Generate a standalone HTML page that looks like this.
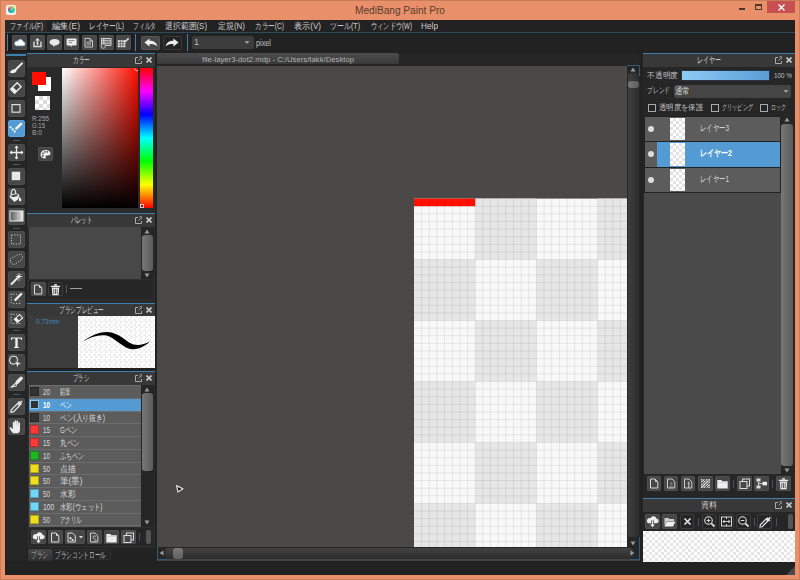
<!DOCTYPE html>
<html><head><meta charset="utf-8"><style>
*{margin:0;padding:0;box-sizing:border-box}
html,body{width:800px;height:580px;overflow:hidden;background:#E9906A;font-family:"Liberation Sans",sans-serif;position:relative}
div,span,svg{position:absolute}
.t{white-space:nowrap;line-height:1;transform-origin:0 0}
</style></head><body>
<div style="left:0px;top:0px;width:800px;height:580px;box-shadow:inset 0 0 0 1px #c97d58"></div>
<div style="left:6px;top:5px;width:10px;height:10px;background:#f4f4f4;border-radius:2px"></div>
<div style="left:8px;top:6px;width:7px;height:7px;border-radius:50%;background:radial-gradient(circle at 55% 50%,#20e0f0 0,rgba(32,224,240,0) 60%),conic-gradient(from -20deg,#f7a03a,#a8e040 70deg,#40c848 140deg,#18b0a8 210deg,#1898b8 250deg,#f02c64 300deg,#f7a03a)"></div>
<span class="t j" style="left:355.0px;top:6px;font-size:10px;color:#583c2e;--w:90;transform:scaleX(1.0118);">MediBang Paint Pro</span>
<div style="left:739px;top:8px;width:6px;height:2px;background:#4b3428"></div>
<div style="left:755px;top:4px;width:7px;height:6px;border:1px solid #4b3428;border-top-width:2px"></div>
<div style="left:767px;top:1px;width:28px;height:12px;background:#C75050"></div>
<svg style="left:778px;top:4px;" width="7" height="7" viewBox="0 0 7 7"><path d="M0.5 0.5L6.5 6.5M6.5 0.5L0.5 6.5" stroke="#fff" stroke-width="1.4"/></svg>
<div style="left:5px;top:20px;width:790px;height:555px;background:#222"></div>
<div style="left:5px;top:20px;width:42px;height:12px;background:#2a2a2a"></div>
<span class="t j" style="left:10.0px;top:22px;font-size:9px;color:#d0d0d0;--w:33;transform:scaleX(0.6947);">ファイル(F)</span>
<span class="t j" style="left:52.0px;top:22px;font-size:9px;color:#d0d0d0;--w:28;transform:scaleX(0.9333);">編集(E)</span>
<span class="t j" style="left:89.0px;top:22px;font-size:9px;color:#d0d0d0;--w:35;transform:scaleX(0.7447);">レイヤー(L)</span>
<span class="t j" style="left:133.0px;top:22px;font-size:9px;color:#d0d0d0;--w:23;transform:scaleX(0.6389);">フィルタ</span>
<span class="t j" style="left:165.0px;top:22px;font-size:9px;color:#d0d0d0;--w:42;transform:scaleX(0.8750);">選択範囲(S)</span>
<span class="t j" style="left:218.0px;top:22px;font-size:9px;color:#d0d0d0;--w:27;transform:scaleX(0.8852);">定規(N)</span>
<span class="t j" style="left:255.0px;top:22px;font-size:9px;color:#d0d0d0;--w:29;transform:scaleX(0.7342);">カラー(C)</span>
<span class="t j" style="left:294.0px;top:22px;font-size:9px;color:#d0d0d0;--w:27;transform:scaleX(0.9000);">表示(V)</span>
<span class="t j" style="left:330.0px;top:22px;font-size:9px;color:#d0d0d0;--w:30;transform:scaleX(0.7792);">ツール(T)</span>
<span class="t j" style="left:371.0px;top:22px;font-size:9px;color:#d0d0d0;--w:41;transform:scaleX(0.6891);">ウィンドウ(W)</span>
<span class="t j" style="left:421.0px;top:22px;font-size:9px;color:#d0d0d0;--w:17;transform:scaleX(0.9181);">Help</span>
<div style="left:5px;top:32px;width:790px;height:1px;background:#2e4a5e"></div>
<div style="left:8px;top:33px;width:125px;height:19px;background:#1c1c1c"></div>
<div style="left:7px;top:34px;width:1px;height:17px;background:#3f7fae"></div>
<div style="left:12px;top:35px;width:15px;height:15px;background:#484848;border-radius:2px;box-shadow:inset 0 0 0 1px #4e4e4e"></div>
<svg style="left:12px;top:35px;" width="15" height="15" viewBox="0 0 15 15"><path d="M4.4 10.8h6.6a2 2 0 0 0 0.2-4a2.8 2.8 0 0 0-5.4-0.6a2.1 2.1 0 0 0-1.4 4.6z" fill="#fff" stroke="#8cc2ee" stroke-width="0.8"/></svg>
<div style="left:30px;top:35px;width:15px;height:15px;background:#484848;border-radius:2px;box-shadow:inset 0 0 0 1px #4e4e4e"></div>
<svg style="left:30px;top:35px;" width="15" height="15" viewBox="0 0 15 15"><path d="M4 6.5v5h7v-5" stroke="#ddd" stroke-width="1.4" fill="none"/><path d="M7.5 10V4.2" stroke="#ddd" stroke-width="1.6"/><path d="M5 5.6L7.5 3 10 5.6z" fill="#ddd"/></svg>
<div style="left:47px;top:35px;width:15px;height:15px;background:#484848;border-radius:2px;box-shadow:inset 0 0 0 1px #4e4e4e"></div>
<svg style="left:47px;top:35px;" width="15" height="15" viewBox="0 0 15 15"><ellipse cx="7.6" cy="7.2" rx="5" ry="3.3" fill="#e8e8e8"/><path d="M6 9.5L6.5 12L8.5 10z" fill="#e8e8e8"/></svg>
<div style="left:64px;top:35px;width:15px;height:15px;background:#484848;border-radius:2px;box-shadow:inset 0 0 0 1px #4e4e4e"></div>
<svg style="left:64px;top:35px;" width="15" height="15" viewBox="0 0 15 15"><rect x="2.6" y="3.5" width="10" height="7" rx="1" fill="#eee"/><path d="M6 10.5L7 12L8.5 10.5z" fill="#eee"/><path d="M4.5 5.6h6M4.5 7.6h3.5" stroke="#888" stroke-width="1"/></svg>
<div style="left:82px;top:35px;width:15px;height:15px;background:#484848;border-radius:2px;box-shadow:inset 0 0 0 1px #4e4e4e"></div>
<svg style="left:82px;top:35px;" width="15" height="15" viewBox="0 0 15 15"><path d="M3 3.4h4.9l2.6 2.6v6h-7.5z" fill="#3c3c3c" stroke="#ddd" stroke-width="0.9"/><rect x="4.4" y="6.2" width="4.7" height="4.4" fill="#8a8a8a"/><path d="M7.9 3.4v2.6h2.6" fill="none" stroke="#ddd" stroke-width="0.8"/></svg>
<div style="left:99px;top:35px;width:15px;height:15px;background:#484848;border-radius:2px;box-shadow:inset 0 0 0 1px #4e4e4e"></div>
<svg style="left:99px;top:35px;" width="15" height="15" viewBox="0 0 15 15"><path d="M2.5 3.5h9.5v7h-9.5z M2.5 5.8h9.5 M2.5 8.2h9.5 M4.8 3.5v7" stroke="#ddd" stroke-width="0.9" fill="#666"/><circle cx="4.3" cy="11" r="2.3" fill="#555" stroke="#ccc" stroke-width="0.8"/></svg>
<div style="left:116px;top:35px;width:15px;height:15px;background:#484848;border-radius:2px;box-shadow:inset 0 0 0 1px #4e4e4e"></div>
<svg style="left:116px;top:35px;" width="15" height="15" viewBox="0 0 15 15"><path d="M1.8 5.2h7.6v7h-7.6z" fill="#eee"/><path d="M1.8 7.6h7.6M1.8 9.9h7.6M4.3 5.2v7M6.8 5.2v7" stroke="#555" stroke-width="0.8"/><path d="M9.2 6.8L12.6 3.4" stroke="#ddd" stroke-width="1.6"/><path d="M8.2 7.8l0.4-1.2l0.8 0.8z" fill="#ddd"/></svg>
<div style="left:135px;top:34px;width:1px;height:17px;background:#3f7fae"></div>
<div style="left:141px;top:36px;width:19px;height:14px;background:#484848;border-radius:2px;box-shadow:inset 0 0 0 1px #555"></div>
<svg style="left:141px;top:36px;" width="19" height="14" viewBox="0 0 19 14"><path d="M3.4 6.4L8.6 2.4V4.8C12.8 4.8 15.8 6.8 16.4 10.6C14.6 8.6 12 8.1 8.6 8.1V10.4z" fill="#eee"/></svg>
<div style="left:163px;top:36px;width:19px;height:14px;background:#232323;border-radius:2px;box-shadow:inset 0 0 0 1px #3a3a3a"></div>
<svg style="left:163px;top:36px;" width="19" height="14" viewBox="0 0 19 14"><path d="M15.6 6.4L10.4 2.4V4.8C6.2 4.8 3.2 6.8 2.6 10.6C4.4 8.6 7 8.1 10.4 8.1V10.4z" fill="#eee"/></svg>
<div style="left:187px;top:34px;width:1px;height:17px;background:#3f7fae"></div>
<div style="left:192px;top:36px;width:62px;height:13px;background:#3c3c3c;border-radius:2px"></div>
<span class="t" style="left:194px;top:38px;font-size:9px;color:#bbb;">1</span>
<svg style="left:244px;top:40px;" width="6" height="5" viewBox="0 0 6 5"><path d="M0.5 1L3 4L5.5 1z" fill="#9a9a9a"/></svg>
<span class="t j" style="left:256.0px;top:39px;font-size:9px;color:#c4c4c4;--w:15;transform:scaleX(0.8101);">pixel</span>
<div style="left:6px;top:53px;width:20px;height:508px;background:#262626"></div>
<div style="left:6px;top:54px;width:20px;height:2px;background:#3f7fae"></div>
<div style="left:8px;top:60px;width:17px;height:17px;background:#474747;border-radius:3px;box-shadow:inset 0 0 0 1px #4d4d4d"></div>
<svg style="left:8px;top:60px;" width="17" height="17" viewBox="0 0 17 17"><path d="M14 3.4L7.6 9.8" stroke="#eee" stroke-width="2" stroke-linecap="round"/><path d="M1.8 12.8C2.5 10.3 5 9 7.2 9.4L8.6 10.8C8.2 13 5 13.8 1.8 12.8z" fill="#eee"/></svg>
<div style="left:8px;top:80px;width:17px;height:17px;background:#474747;border-radius:3px;box-shadow:inset 0 0 0 1px #4d4d4d"></div>
<svg style="left:8px;top:80px;" width="17" height="17" viewBox="0 0 17 17"><g transform="rotate(-45 7.9 8)"><rect x="3.3" y="5.2" width="9.2" height="5.6" fill="none" stroke="#eee" stroke-width="1.3"/><rect x="3.3" y="5.2" width="3.2" height="5.6" fill="#eee"/></g></svg>
<div style="left:8px;top:100px;width:17px;height:17px;background:#474747;border-radius:3px;box-shadow:inset 0 0 0 1px #4d4d4d"></div>
<svg style="left:8px;top:100px;" width="17" height="17" viewBox="0 0 17 17"><rect x="4" y="4.6" width="8" height="7.6" fill="none" stroke="#ddd" stroke-width="1.2"/></svg>
<div style="left:8px;top:120px;width:17px;height:17px;background:#559bd3;border-radius:3px;box-shadow:inset 0 0 0 1px #5aa5e0"></div>
<svg style="left:8px;top:120px;" width="17" height="17" viewBox="0 0 17 17"><path d="M8.4 8.4L13.2 3.8" stroke="#f4f4f4" stroke-width="2.5" stroke-linecap="round"/><circle cx="2.6" cy="7.3" r="1.15" fill="#f4f4f4"/><circle cx="4.7" cy="9.4" r="1.15" fill="#f4f4f4"/><circle cx="6.7" cy="11.5" r="1.15" fill="#f4f4f4"/></svg>
<div style="left:8px;top:144px;width:17px;height:17px;background:#474747;border-radius:3px;box-shadow:inset 0 0 0 1px #4d4d4d"></div>
<svg style="left:8px;top:144px;" width="17" height="17" viewBox="0 0 17 17"><path d="M8.5 2v13M2 8.5h13" stroke="#eee" stroke-width="1.3"/><path d="M8.5 1.6L6.6 4h3.8zM8.5 15.4L6.6 13h3.8zM1.6 8.5L4 6.6v3.8zM15.4 8.5L13 6.6v3.8z" fill="#eee"/></svg>
<div style="left:8px;top:168px;width:17px;height:17px;background:#474747;border-radius:3px;box-shadow:inset 0 0 0 1px #4d4d4d"></div>
<svg style="left:8px;top:168px;" width="17" height="17" viewBox="0 0 17 17"><rect x="3.7" y="3.7" width="8.5" height="8.5" fill="#e8e8e8"/></svg>
<div style="left:8px;top:188px;width:17px;height:17px;background:#474747;border-radius:3px;box-shadow:inset 0 0 0 1px #4d4d4d"></div>
<svg style="left:8px;top:188px;" width="17" height="17" viewBox="0 0 17 17"><path d="M3.4 7.2C2.8 3.6 4 1.4 5.6 1.4C7.2 1.4 7.9 3.4 7.5 6" stroke="#ddd" stroke-width="1.3" fill="none"/><path d="M1.4 8.8C3 5.4 8.6 4.6 11.3 7L10 11.4L6.4 13.9z" fill="#eee"/><ellipse cx="6.5" cy="7.6" rx="3.4" ry="1.1" transform="rotate(-12 6.5 7.6)" fill="#474747"/><path d="M11 8.2C12.5 9.8 13.8 11 13.4 12.6C12.9 13.6 11.1 13.5 10.9 12.3C10.7 11 11.3 10 11 8.2z" fill="#eee"/></svg>
<div style="left:8px;top:208px;width:17px;height:17px;background:#474747;border-radius:3px;box-shadow:inset 0 0 0 1px #4d4d4d"></div>
<svg style="left:8px;top:208px;" width="17" height="17" viewBox="0 0 17 17"><defs><linearGradient id="gg"><stop offset="0" stop-color="#555"/><stop offset="1" stop-color="#e8e8e8"/></linearGradient></defs><rect x="2" y="3" width="13" height="10" fill="url(#gg)" stroke="#eee" stroke-width="1"/></svg>
<div style="left:8px;top:231px;width:17px;height:17px;background:#474747;border-radius:3px;box-shadow:inset 0 0 0 1px #4d4d4d"></div>
<svg style="left:8px;top:231px;" width="17" height="17" viewBox="0 0 17 17"><rect x="3.5" y="4" width="9" height="9" fill="none" stroke="#ccc" stroke-width="1" stroke-dasharray="1.2 1.5"/></svg>
<div style="left:8px;top:251px;width:17px;height:17px;background:#474747;border-radius:3px;box-shadow:inset 0 0 0 1px #4d4d4d"></div>
<svg style="left:8px;top:251px;" width="17" height="17" viewBox="0 0 17 17"><path d="M2.5 10C1.5 7 4.5 6.5 7 5.5C9.5 3.5 14 1.8 14.5 5.5C15 9 11 10 8 12.5C5.5 14.5 3 13 2.5 10z" fill="none" stroke="#ccc" stroke-width="1" stroke-dasharray="1 1.3"/></svg>
<div style="left:8px;top:271px;width:17px;height:17px;background:#474747;border-radius:3px;box-shadow:inset 0 0 0 1px #4d4d4d"></div>
<svg style="left:8px;top:271px;" width="17" height="17" viewBox="0 0 17 17"><path d="M3.5 13L10.5 6" stroke="#eee" stroke-width="1.9" stroke-linecap="round"/><path d="M11 5.5m0-3.2v2M11 8v2M7.8 5.5h2M12.3 5.5h2M8.8 3.3l1.2 1.2M12 6.6l1.2 1.2M13.2 3.3l-1.2 1.2" stroke="#eee" stroke-width="0.8"/><circle cx="11" cy="5.5" r="1.3" fill="#fff"/></svg>
<div style="left:8px;top:291px;width:17px;height:17px;background:#474747;border-radius:3px;box-shadow:inset 0 0 0 1px #4d4d4d"></div>
<svg style="left:8px;top:291px;" width="17" height="17" viewBox="0 0 17 17"><path d="M2.6 3.3h1.6M5.2 3.3h1.2M8 3.3h1.2M3.2 5.8v1.2M3.2 8.4v1.2M3.2 11v1.2M5.2 12.6h1.2M8 12.6h1.2M10.8 12.6h1.4" stroke="#c8c8c8" stroke-width="1"/><path d="M7.4 8.9L13.2 3" stroke="#eee" stroke-width="2.4" stroke-linecap="round"/><path d="M11.5 9.5l0.8 0.8" stroke="#ccc" stroke-width="0.9"/></svg>
<div style="left:8px;top:311px;width:17px;height:17px;background:#474747;border-radius:3px;box-shadow:inset 0 0 0 1px #4d4d4d"></div>
<svg style="left:8px;top:311px;" width="17" height="17" viewBox="0 0 17 17"><path d="M2.6 3.3h1.6M5.2 3.3h1.2M8 3.3h1.2M3.2 5.8v1.2M3.2 8.4v1.2M3.2 11v1.2M5.2 12.6h1.2M8 12.6h1.2M10.8 12.6h1.4" stroke="#c8c8c8" stroke-width="1"/><g transform="rotate(-42 10.3 7.6)"><rect x="7" y="5.4" width="7" height="4.6" fill="none" stroke="#eee" stroke-width="1.1"/><rect x="7" y="5.4" width="2.6" height="4.6" fill="#eee"/></g></svg>
<div style="left:8px;top:334px;width:17px;height:17px;background:#474747;border-radius:3px;box-shadow:inset 0 0 0 1px #4d4d4d"></div>
<svg style="left:8px;top:334px;" width="17" height="17" viewBox="0 0 17 17"><path d="M3 3.5h11v2.6h-0.8l-0.5-1.6h-3v8.3l1.3 0.5v0.7h-5v-0.7l1.3-0.5v-8.3h-3l-0.5 1.6H3z" fill="#eee"/></svg>
<div style="left:8px;top:354px;width:17px;height:17px;background:#474747;border-radius:3px;box-shadow:inset 0 0 0 1px #4d4d4d"></div>
<svg style="left:8px;top:354px;" width="17" height="17" viewBox="0 0 17 17"><path d="M5 2L8.2 2.8L9.6 5.6L8.9 8.8L5.8 10.2L2.8 9.4L1.4 6.5L2.4 3.3z" fill="none" stroke="#ddd" stroke-width="1.1" stroke-linejoin="round"/><path d="M7.1 7.2L13.6 9.4L10.6 10.5L9.4 13.6z" fill="#eee" stroke="#474747" stroke-width="0.5"/></svg>
<div style="left:8px;top:374px;width:17px;height:17px;background:#474747;border-radius:3px;box-shadow:inset 0 0 0 1px #4d4d4d"></div>
<svg style="left:8px;top:374px;" width="17" height="17" viewBox="0 0 17 17"><path d="M9.2 8.2L13.2 4.2" stroke="#eee" stroke-width="3.4" stroke-linecap="round"/><path d="M9 8.3L3 13.2L8 12z" fill="#333" stroke="#e6e6e6" stroke-width="1.1" stroke-linejoin="round"/></svg>
<div style="left:8px;top:398px;width:17px;height:17px;background:#474747;border-radius:3px;box-shadow:inset 0 0 0 1px #4d4d4d"></div>
<svg style="left:8px;top:398px;" width="17" height="17" viewBox="0 0 17 17"><path d="M3 14.2l0.3-2.3l6.2-6.2l2 2l-6.2 6.2z" fill="none" stroke="#eee" stroke-width="1.2"/><path d="M9.5 4.5l1.5-1.5l1 1l1.5-1.5l1 1l-1.5 1.5l1 1l-1.5 1.5z" fill="#eee"/></svg>
<div style="left:8px;top:418px;width:17px;height:17px;background:#474747;border-radius:3px;box-shadow:inset 0 0 0 1px #4d4d4d"></div>
<svg style="left:8px;top:418px;" width="17" height="17" viewBox="0 0 17 17"><path d="M5 15.2C3.6 13.8 2.5 12.2 1.8 10.6L1.6 9.6C1.9 9 2.6 9 3.1 9.5L4.8 11.2L4.8 4.6C4.8 3.6 6.4 3.6 6.4 4.6L6.5 8.6L6.6 2.9C6.6 1.9 8.2 1.9 8.2 2.9L8.3 8.6L8.5 3.3C8.5 2.3 10.1 2.3 10.1 3.3L10.2 8.8L10.4 5C10.4 4.1 12 4.1 12 5L12 11.2C12 13.6 11 15.2 9 15.2z" fill="#eee"/></svg>
<div style="left:13px;top:140px;width:7px;height:1px;background:#4a5866"></div>
<div style="left:13px;top:164px;width:7px;height:1px;background:#4a5866"></div>
<div style="left:13px;top:228px;width:7px;height:1px;background:#4a5866"></div>
<div style="left:13px;top:330px;width:7px;height:1px;background:#4a5866"></div>
<div style="left:13px;top:394px;width:7px;height:1px;background:#4a5866"></div>
<div style="left:27px;top:53px;width:128px;height:1px;background:#3f7fae"></div>
<div style="left:27px;top:54px;width:128px;height:13px;background:#383838"></div>
<span class="t j" style="left:72.5px;top:56px;font-size:9px;color:#d0d0d0;--w:17;transform:scaleX(0.6296);">カラー</span>
<svg style="left:134px;top:56px;" width="8" height="8" viewBox="0 0 8 8"><path d="M4 1.5H1.5v6h6V5" fill="none" stroke="#aaa" stroke-width="1"/><path d="M4.5 4.5L7.5 1.5M5.5 0.8h2.6v2.6" fill="none" stroke="#aaa" stroke-width="0.9"/></svg>
<svg style="left:146px;top:57px;" width="6" height="6" viewBox="0 0 6 6"><path d="M0.5 0.5L5.5 5.5M5.5 0.5L0.5 5.5" stroke="#c8c8c8" stroke-width="1.6"/></svg>
<div style="left:27px;top:67px;width:128px;height:146px;background:#2a2a2a"></div>
<div style="left:38px;top:77px;width:13px;height:14px;background:#fff"></div>
<div style="left:32px;top:72px;width:14px;height:13px;background:#ff0f00"></div>
<div style="left:35px;top:96px;width:15px;height:14px;background:repeating-conic-gradient(#dcdcdc 0 25%,#fff 0 50%) 0 0/8px 8px"></div>
<span class="t j" style="left:32.0px;top:115px;font-size:7px;color:#a8a8a8;--w:17;transform:scaleX(0.9097);">R:255</span>
<span class="t j" style="left:32.0px;top:122px;font-size:7px;color:#a8a8a8;--w:13;transform:scaleX(0.8560);">G:15</span>
<span class="t j" style="left:32.0px;top:129px;font-size:7px;color:#a8a8a8;--w:10;transform:scaleX(0.9510);">B:0</span>
<div style="left:38px;top:147px;width:15px;height:14px;background:#474747;border-radius:2px;box-shadow:inset 0 0 0 1px #4f4f4f"></div>
<svg style="left:38px;top:147px;" width="15" height="14" viewBox="0 0 15 14"><path d="M7.5 3C4.5 3 2.5 5 2.5 7.5C2.5 10 4.5 11.5 7 11.5C8.2 11.5 8 10.5 7.6 10C7.2 9.3 7.8 8.5 8.8 8.5H10C11.5 8.5 12.5 7.8 12.5 6.5C12.5 4.5 10.5 3 7.5 3z" fill="#eee"/><circle cx="5" cy="6.5" r="0.9" fill="#555"/><circle cx="6.8" cy="4.8" r="0.9" fill="#555"/><circle cx="9.2" cy="4.8" r="0.9" fill="#555"/><circle cx="4.8" cy="9" r="0.9" fill="#555"/></svg>
<div style="left:62px;top:68px;width:76px;height:140px;background:linear-gradient(to bottom,rgba(0,0,0,0),#000),linear-gradient(to right,#fff,#ff0f00)"></div>
<div style="left:140px;top:68px;width:13px;height:140px;background:linear-gradient(to bottom,#f00 0%,#f0f 16.67%,#00f 33.33%,#0ff 50%,#0f0 66.67%,#ff0 83.33%,#f00 100%)"></div>
<svg style="left:134px;top:66px;" width="6" height="6" viewBox="0 0 6 6"><path d="M1 2.5A2 2 0 0 0 4 4.5" fill="none" stroke="#ddd" stroke-width="0.9"/></svg>
<div style="left:140px;top:204px;width:4px;height:4px;box-shadow:inset 0 0 0 1px #ccc;background:#c00"></div>
<div style="left:27px;top:213px;width:128px;height:1px;background:#3f7fae"></div>
<div style="left:27px;top:214px;width:128px;height:13px;background:#383838"></div>
<span class="t j" style="left:70.5px;top:216px;font-size:9px;color:#d0d0d0;--w:21;transform:scaleX(0.5833);">パレット</span>
<svg style="left:134px;top:216px;" width="8" height="8" viewBox="0 0 8 8"><path d="M4 1.5H1.5v6h6V5" fill="none" stroke="#aaa" stroke-width="1"/><path d="M4.5 4.5L7.5 1.5M5.5 0.8h2.6v2.6" fill="none" stroke="#aaa" stroke-width="0.9"/></svg>
<svg style="left:146px;top:217px;" width="6" height="6" viewBox="0 0 6 6"><path d="M0.5 0.5L5.5 5.5M5.5 0.5L0.5 5.5" stroke="#c8c8c8" stroke-width="1.6"/></svg>
<div style="left:27px;top:227px;width:128px;height:76px;background:#2a2a2a"></div>
<div style="left:29px;top:227px;width:112px;height:52px;background:#484848"></div>
<div style="left:141px;top:227px;width:13px;height:52px;background:#262626"></div>
<svg style="left:144px;top:229px;" width="6" height="5" viewBox="0 0 6 5"><path d="M0.5 4.5L3 0.5L5.5 4.5z" fill="#9a9a9a"/></svg>
<div style="left:142px;top:235px;width:11px;height:36px;background:linear-gradient(90deg,#777,#5c5c5c);border-radius:3px"></div>
<svg style="left:144px;top:273px;" width="6" height="5" viewBox="0 0 6 5"><path d="M0.5 0.5L3 4.5L5.5 0.5z" fill="#9a9a9a"/></svg>
<div style="left:28px;top:279px;width:126px;height:21px;background:#262626;box-shadow:inset 0 0 0 1px #2e2e2e"></div>
<div style="left:31px;top:282px;width:15px;height:14px;background:#474747;border-radius:2px;box-shadow:inset 0 0 0 1px #4f4f4f"></div>
<svg style="left:31px;top:282px;" width="15" height="14" viewBox="0 0 15 14"><path d="M3.5 3h4.5l2.8 2.8v6.2h-7.3z" fill="none" stroke="#ddd" stroke-width="1"/><path d="M8 3v2.8h2.8z" fill="#ddd"/></svg>
<div style="left:48px;top:282px;width:15px;height:14px;background:#252525;border-radius:2px;box-shadow:inset 0 0 0 1px #3d3d3d"></div>
<svg style="left:48px;top:282px;" width="15" height="14" viewBox="0 0 15 14"><path d="M2.8 4.3h9.4M6 2.8h3" stroke="#eee" stroke-width="1.3"/><path d="M3.8 5.6h7.4l-0.6 7.6h-6.2z" fill="#eee"/><path d="M5.8 6.8v5.2M7.5 6.8v5.2M9.2 6.8v5.2" stroke="#555" stroke-width="0.9"/></svg>
<div style="left:66px;top:285px;width:1px;height:8px;background:#555"></div>
<div style="left:70px;top:288px;width:12px;height:1px;background:#a0a0a0"></div>
<div style="left:27px;top:303px;width:128px;height:1px;background:#3f7fae"></div>
<div style="left:27px;top:304px;width:128px;height:13px;background:#383838"></div>
<span class="t j" style="left:58.5px;top:306px;font-size:9px;color:#d0d0d0;--w:45;transform:scaleX(0.6250);">ブラシプレビュー</span>
<svg style="left:134px;top:306px;" width="8" height="8" viewBox="0 0 8 8"><path d="M4 1.5H1.5v6h6V5" fill="none" stroke="#aaa" stroke-width="1"/><path d="M4.5 4.5L7.5 1.5M5.5 0.8h2.6v2.6" fill="none" stroke="#aaa" stroke-width="0.9"/></svg>
<svg style="left:146px;top:307px;" width="6" height="6" viewBox="0 0 6 6"><path d="M0.5 0.5L5.5 5.5M5.5 0.5L0.5 5.5" stroke="#c8c8c8" stroke-width="1.6"/></svg>
<div style="left:27px;top:317px;width:128px;height:54px;background:#2a2a2a"></div>
<div style="left:28px;top:316px;width:50px;height:52px;background:#3c3c3c"></div>
<span class="t j" style="left:36.0px;top:318px;font-size:7px;color:#3f84bd;--w:23.5;transform:scaleX(0.9290);">0.73mm</span>
<div style="left:78px;top:316px;width:77px;height:52px;background:repeating-conic-gradient(#efefef 0 25%,#fff 0 50%) 0 0/5px 5px"></div>
<svg style="left:78px;top:316px;" width="77" height="52" viewBox="0 0 77 52"><path d="M5 25.4C12 20.5 20 16 28.5 16C38 16 45 22 51 26.5C57 30 63.5 30 72 25.6C65.5 31.5 60 33.6 53.5 33.2C45.5 32.4 38 22.2 28.5 19.4C20 18.4 12 21 5 25.4z" fill="#000"/></svg>
<div style="left:27px;top:368px;width:128px;height:3px;background:#222"></div>
<div style="left:27px;top:371px;width:128px;height:1px;background:#3f7fae"></div>
<div style="left:27px;top:372px;width:128px;height:13px;background:#383838"></div>
<span class="t j" style="left:73.0px;top:374px;font-size:9px;color:#d0d0d0;--w:16;transform:scaleX(0.5926);">ブラシ</span>
<svg style="left:134px;top:374px;" width="8" height="8" viewBox="0 0 8 8"><path d="M4 1.5H1.5v6h6V5" fill="none" stroke="#aaa" stroke-width="1"/><path d="M4.5 4.5L7.5 1.5M5.5 0.8h2.6v2.6" fill="none" stroke="#aaa" stroke-width="0.9"/></svg>
<svg style="left:146px;top:375px;" width="6" height="6" viewBox="0 0 6 6"><path d="M0.5 0.5L5.5 5.5M5.5 0.5L0.5 5.5" stroke="#c8c8c8" stroke-width="1.6"/></svg>
<div style="left:27px;top:385px;width:128px;height:163px;background:#2a2a2a"></div>
<div style="left:29px;top:385px;width:112px;height:142px;background:#6c6c6c"></div>
<div style="left:29px;top:386px;width:112px;height:141px;background:repeating-linear-gradient(to bottom,#5c5c5c 0,#5c5c5c 11.77px,#6c6c6c 11.77px,#6c6c6c 12.77px)"></div>
<div style="left:30px;top:387px;width:9px;height:9px;background:#333;box-shadow:inset 0 0 0 1px rgba(0,0,0,0.25)"></div>
<span class="t j" style="left:43.0px;top:388px;font-size:9px;color:#dadada;--w:7;transform:scaleX(0.6989);">20</span>
<span class="t j" style="left:60.0px;top:388px;font-size:9px;color:#dadada;--w:10.5;transform:scaleX(0.5833);">鉛筆</span>
<div style="left:29px;top:399px;width:112px;height:12px;background:#559bd3"></div>
<div style="left:30px;top:400px;width:9px;height:9px;background:#333;box-shadow:inset 0 0 0 1px #8ac4f0"></div>
<span class="t j" style="left:43.0px;top:401px;font-size:9px;color:#fff;--w:7;transform:scaleX(0.6989);font-weight:bold">10</span>
<span class="t j" style="left:60.0px;top:401px;font-size:9px;color:#fff;--w:12;transform:scaleX(0.6667);">ペン</span>
<div style="left:30px;top:413px;width:9px;height:9px;background:#333;box-shadow:inset 0 0 0 1px rgba(0,0,0,0.25)"></div>
<span class="t j" style="left:43.0px;top:414px;font-size:9px;color:#dadada;--w:7;transform:scaleX(0.6989);">10</span>
<span class="t j" style="left:60.0px;top:414px;font-size:9px;color:#dadada;--w:45;transform:scaleX(0.7500);">ペン(入り抜き)</span>
<div style="left:30px;top:425px;width:9px;height:9px;background:#fd3a3a;box-shadow:inset 0 0 0 1px rgba(0,0,0,0.25)"></div>
<span class="t j" style="left:43.0px;top:426px;font-size:9px;color:#dadada;--w:7;transform:scaleX(0.6989);">15</span>
<span class="t j" style="left:60.0px;top:426px;font-size:9px;color:#dadada;--w:17.6;transform:scaleX(0.7036);">Gペン</span>
<div style="left:30px;top:438px;width:9px;height:9px;background:#fd3a3a;box-shadow:inset 0 0 0 1px rgba(0,0,0,0.25)"></div>
<span class="t j" style="left:43.0px;top:439px;font-size:9px;color:#dadada;--w:7;transform:scaleX(0.6989);">15</span>
<span class="t j" style="left:60.0px;top:439px;font-size:9px;color:#dadada;--w:20;transform:scaleX(0.7407);">丸ペン</span>
<div style="left:30px;top:451px;width:9px;height:9px;background:#1eb81e;box-shadow:inset 0 0 0 1px rgba(0,0,0,0.25)"></div>
<span class="t j" style="left:43.0px;top:452px;font-size:9px;color:#dadada;--w:7;transform:scaleX(0.6989);">10</span>
<span class="t j" style="left:60.0px;top:452px;font-size:9px;color:#dadada;--w:24;transform:scaleX(0.6667);">ふちペン</span>
<div style="left:30px;top:464px;width:9px;height:9px;background:#eedd1e;box-shadow:inset 0 0 0 1px rgba(0,0,0,0.25)"></div>
<span class="t j" style="left:43.0px;top:465px;font-size:9px;color:#dadada;--w:7;transform:scaleX(0.6989);">50</span>
<span class="t j" style="left:60.0px;top:465px;font-size:9px;color:#dadada;--w:15.6;transform:scaleX(0.8667);">点描</span>
<div style="left:30px;top:476px;width:9px;height:9px;background:#eedd1e;box-shadow:inset 0 0 0 1px rgba(0,0,0,0.25)"></div>
<span class="t j" style="left:43.0px;top:477px;font-size:9px;color:#dadada;--w:7;transform:scaleX(0.6989);">50</span>
<span class="t j" style="left:60.0px;top:477px;font-size:9px;color:#dadada;--w:22.6;transform:scaleX(0.9417);">筆(墨)</span>
<div style="left:30px;top:489px;width:9px;height:9px;background:#72d6f6;box-shadow:inset 0 0 0 1px rgba(0,0,0,0.25)"></div>
<span class="t j" style="left:43.0px;top:490px;font-size:9px;color:#dadada;--w:7;transform:scaleX(0.6989);">50</span>
<span class="t j" style="left:60.0px;top:490px;font-size:9px;color:#dadada;--w:15.4;transform:scaleX(0.8556);">水彩</span>
<div style="left:30px;top:502px;width:9px;height:9px;background:#72d6f6;box-shadow:inset 0 0 0 1px rgba(0,0,0,0.25)"></div>
<span class="t j" style="left:43.0px;top:503px;font-size:9px;color:#dadada;--w:11.4;transform:scaleX(0.7584);">100</span>
<span class="t j" style="left:60.0px;top:503px;font-size:9px;color:#dadada;--w:42.5;transform:scaleX(0.7083);">水彩(ウェット)</span>
<div style="left:30px;top:515px;width:9px;height:9px;background:#eedd1e;box-shadow:inset 0 0 0 1px rgba(0,0,0,0.25)"></div>
<span class="t j" style="left:43.0px;top:516px;font-size:9px;color:#dadada;--w:7;transform:scaleX(0.6989);">50</span>
<span class="t j" style="left:60.0px;top:516px;font-size:9px;color:#dadada;--w:21.7;transform:scaleX(0.6028);">アクリル</span>
<div style="left:141px;top:385px;width:13px;height:142px;background:#262626"></div>
<svg style="left:144px;top:387px;" width="6" height="5" viewBox="0 0 6 5"><path d="M0.5 4.5L3 0.5L5.5 4.5z" fill="#9a9a9a"/></svg>
<div style="left:142px;top:393px;width:11px;height:78px;background:linear-gradient(90deg,#777,#5c5c5c);border-radius:3px"></div>
<svg style="left:144px;top:520px;" width="6" height="5" viewBox="0 0 6 5"><path d="M0.5 0.5L3 4.5L5.5 0.5z" fill="#9a9a9a"/></svg>
<div style="left:28px;top:527px;width:126px;height:20px;background:#262626;box-shadow:inset 0 0 0 1px #2e2e2e"></div>
<div style="left:31px;top:530px;width:15px;height:14px;background:#474747;border-radius:2px;box-shadow:inset 0 0 0 1px #4f4f4f"></div>
<svg style="left:31px;top:530px;" width="15" height="14" viewBox="0 0 15 14"><path d="M3.6 9.2h7.8a2.2 2.2 0 0 0 0.2-4.4a3.2 3.2 0 0 0-6.1-0.6a2.3 2.3 0 0 0-1.9 5z" fill="#eee"/><path d="M7.5 6.5v6" stroke="#474747" stroke-width="3"/><path d="M7.5 6.5v5" stroke="#eee" stroke-width="1.4"/><path d="M5.2 10.4L7.5 13.2L9.8 10.4z" fill="#eee"/></svg>
<div style="left:48px;top:530px;width:15px;height:14px;background:#474747;border-radius:2px;box-shadow:inset 0 0 0 1px #4f4f4f"></div>
<svg style="left:48px;top:530px;" width="15" height="14" viewBox="0 0 15 14"><path d="M3.5 3h4.5l2.8 2.8v6.2h-7.3z" fill="none" stroke="#ddd" stroke-width="1"/><path d="M8 3v2.8h2.8z" fill="#ddd"/></svg>
<div style="left:65px;top:530px;width:20px;height:14px;background:#474747;border-radius:2px;box-shadow:inset 0 0 0 1px #4f4f4f"></div>
<svg style="left:65px;top:530px;" width="20" height="14" viewBox="0 0 20 14"><path d="M3 3h4.5l2.8 2.8v6.2h-7.3z" fill="none" stroke="#ddd" stroke-width="1"/><rect x="4.5" y="7" width="2" height="2" fill="#ddd"/><rect x="6.5" y="9" width="2" height="2" fill="#ddd"/><rect x="4.5" y="9" width="2" height="2" fill="#777"/></svg>
<div style="left:87px;top:530px;width:15px;height:14px;background:#474747;border-radius:2px;box-shadow:inset 0 0 0 1px #4f4f4f"></div>
<svg style="left:87px;top:530px;" width="15" height="14" viewBox="0 0 15 14"><path d="M3.5 3h4.5l2.8 2.8v6.2h-7.3z" fill="none" stroke="#ccc" stroke-width="1"/><path d="M9 6.5C8 5.5 5.5 5.8 6 7.5C6.5 9 9 8.8 9 10.5C9 12 6.5 12 5.8 11" fill="none" stroke="#ccc" stroke-width="0.9"/></svg>
<div style="left:104px;top:530px;width:15px;height:14px;background:#474747;border-radius:2px;box-shadow:inset 0 0 0 1px #4f4f4f"></div>
<svg style="left:104px;top:530px;" width="15" height="14" viewBox="0 0 15 14"><path d="M2.3 4h4l1 1.2h5.4v7.3H2.3z" fill="#eee"/><path d="M2.3 6.3h10.4" stroke="#bbb" stroke-width="0.6"/></svg>
<div style="left:121px;top:530px;width:15px;height:14px;background:#474747;border-radius:2px;box-shadow:inset 0 0 0 1px #4f4f4f"></div>
<svg style="left:121px;top:530px;" width="15" height="14" viewBox="0 0 15 14"><rect x="5.5" y="3" width="7" height="7" fill="none" stroke="#ddd" stroke-width="1"/><rect x="3" y="5.5" width="7" height="7" fill="#474747" stroke="#ddd" stroke-width="1"/></svg>
<svg style="left:65px;top:530px;" width="20" height="14" viewBox="0 0 20 14"><path d="M14 6h4l-2 2.5z" fill="#ddd"/></svg>
<div style="left:139px;top:533px;width:1px;height:8px;background:#4a5060"></div>
<div style="left:146px;top:530px;width:5px;height:14px;background:#555;border-radius:2px"></div>
<div style="left:28px;top:549px;width:24px;height:12px;background:linear-gradient(#474747,#303030);border-radius:2px 2px 0 0"></div>
<span class="t j" style="left:31.0px;top:551px;font-size:9px;color:#a8a8a8;--w:17;transform:scaleX(0.6296);">ブラシ</span>
<div style="left:52px;top:549px;width:59px;height:11px;background:#252525;border:1px solid #303030;border-radius:2px"></div>
<span class="t j" style="left:55.0px;top:551px;font-size:9px;color:#c0c0c0;--w:51;transform:scaleX(0.6296);">ブラシコントロール</span>
<div style="left:157px;top:53px;width:482px;height:13px;background:#262626"></div>
<div style="left:157px;top:53px;width:242px;height:11px;background:linear-gradient(#4c4c4c,#3a3a3a);border-top-right-radius:3px"></div>
<span class="t j" style="left:202.0px;top:56px;font-size:8px;color:#b4b4b4;--w:152;transform:scaleX(0.9658);">file-layer3-dot2.mdp - C:/Users/takk/Desktop</span>
<div style="left:157px;top:66px;width:470px;height:481px;background:#4a4948"></div>
<svg style="left:414px;top:198px" width="213" height="349" viewBox="0 0 213 349"><rect x="0" y="0.6" width="213" height="348.79999999999995" fill="#f8f8f8"/><rect x="61.20" y="0.60" width="61.20" height="60.96" fill="#e6e6e6"/><rect x="183.60" y="0.60" width="61.20" height="60.96" fill="#e6e6e6"/><rect x="0.00" y="61.56" width="61.20" height="60.96" fill="#e6e6e6"/><rect x="122.40" y="61.56" width="61.20" height="60.96" fill="#e6e6e6"/><rect x="61.20" y="122.52" width="61.20" height="60.96" fill="#e6e6e6"/><rect x="183.60" y="122.52" width="61.20" height="60.96" fill="#e6e6e6"/><rect x="0.00" y="183.48" width="61.20" height="60.96" fill="#e6e6e6"/><rect x="122.40" y="183.48" width="61.20" height="60.96" fill="#e6e6e6"/><rect x="61.20" y="244.44" width="61.20" height="60.96" fill="#e6e6e6"/><rect x="183.60" y="244.44" width="61.20" height="60.96" fill="#e6e6e6"/><rect x="0.00" y="305.40" width="61.20" height="60.96" fill="#e6e6e6"/><rect x="122.40" y="305.40" width="61.20" height="60.96" fill="#e6e6e6"/><rect x="0" y="0.6" width="61.20" height="7.62" fill="#ff0f00"/><path d="M7.65 0.6V349.4M15.30 0.6V349.4M22.95 0.6V349.4M30.60 0.6V349.4M38.25 0.6V349.4M45.90 0.6V349.4M53.55 0.6V349.4M61.20 0.6V349.4M68.85 0.6V349.4M76.50 0.6V349.4M84.15 0.6V349.4M91.80 0.6V349.4M99.45 0.6V349.4M107.10 0.6V349.4M114.75 0.6V349.4M122.40 0.6V349.4M130.05 0.6V349.4M137.70 0.6V349.4M145.35 0.6V349.4M153.00 0.6V349.4M160.65 0.6V349.4M168.30 0.6V349.4M175.95 0.6V349.4M183.60 0.6V349.4M191.25 0.6V349.4M198.90 0.6V349.4M206.55 0.6V349.4M0 8.22H213M0 15.84H213M0 23.46H213M0 31.08H213M0 38.70H213M0 46.32H213M0 53.94H213M0 61.56H213M0 69.18H213M0 76.80H213M0 84.42H213M0 92.04H213M0 99.66H213M0 107.28H213M0 114.90H213M0 122.52H213M0 130.14H213M0 137.76H213M0 145.38H213M0 153.00H213M0 160.62H213M0 168.24H213M0 175.86H213M0 183.48H213M0 191.10H213M0 198.72H213M0 206.34H213M0 213.96H213M0 221.58H213M0 229.20H213M0 236.82H213M0 244.44H213M0 252.06H213M0 259.68H213M0 267.30H213M0 274.92H213M0 282.54H213M0 290.16H213M0 297.78H213M0 305.40H213M0 313.02H213M0 320.64H213M0 328.26H213M0 335.88H213M0 343.50H213" stroke="rgba(0,0,0,0.075)" stroke-width="1" fill="none"/></svg>
<svg style="left:175px;top:484px;" width="10" height="10" viewBox="0 0 10 10"><path d="M1.6 1.6L8 4.8L3 8z" fill="#111" stroke="#d8d8d8" stroke-width="1.3" stroke-linejoin="round"/></svg>
<div style="left:627px;top:66px;width:13px;height:481px;background:#262626"></div>
<div style="left:628px;top:73px;width:11px;height:464px;background:linear-gradient(90deg,#3e3e3e,#2c2c2c);border-radius:3px"></div>
<svg style="left:630px;top:67px;" width="6" height="5" viewBox="0 0 6 5"><path d="M0.5 4.5L3 0.5L5.5 4.5z" fill="#9a9a9a"/></svg>
<div style="left:628px;top:81px;width:11px;height:7px;background:linear-gradient(90deg,#777,#5c5c5c);border-radius:3px"></div>
<svg style="left:630px;top:541px;" width="6" height="5" viewBox="0 0 6 5"><path d="M0.5 0.5L3 4.5L5.5 0.5z" fill="#9a9a9a"/></svg>
<div style="left:157px;top:547px;width:483px;height:12px;background:#262626"></div>
<div style="left:157px;top:559px;width:483px;height:2px;background:#444"></div>
<div style="left:639px;top:537px;width:1px;height:23px;background:#2e5a7c"></div>
<div style="left:630px;top:559px;width:10px;height:1px;background:#2e5a7c"></div>
<div style="left:157px;top:547px;width:1px;height:13px;background:#2e5a7c"></div>
<div style="left:157px;top:559px;width:10px;height:1px;background:#2e5a7c"></div>
<div style="left:627px;top:65px;width:13px;height:1px;background:#2e5a7c"></div>
<div style="left:639px;top:65px;width:1px;height:11px;background:#2e5a7c"></div>
<div style="left:165px;top:548px;width:468px;height:11px;background:linear-gradient(#424242,#2c2c2c);border-radius:3px"></div>
<svg style="left:159px;top:550px;" width="5" height="6" viewBox="0 0 5 6"><path d="M4.5 0.5L0.5 3L4.5 5.5z" fill="#9a9a9a"/></svg>
<div style="left:173px;top:548px;width:10px;height:11px;background:linear-gradient(#7a7a7a,#606060);border-radius:3px"></div>
<svg style="left:630px;top:550px;" width="5" height="6" viewBox="0 0 5 6"><path d="M0.5 0.5L4.5 3L0.5 5.5z" fill="#9a9a9a"/></svg>
<div style="left:643px;top:53px;width:152px;height:1px;background:#3f7fae"></div>
<div style="left:643px;top:54px;width:152px;height:13px;background:#383838"></div>
<span class="t j" style="left:697.0px;top:56px;font-size:9px;color:#d0d0d0;--w:24;transform:scaleX(0.6667);">レイヤー</span>
<svg style="left:774px;top:56px;" width="8" height="8" viewBox="0 0 8 8"><path d="M4 1.5H1.5v6h6V5" fill="none" stroke="#aaa" stroke-width="1"/><path d="M4.5 4.5L7.5 1.5M5.5 0.8h2.6v2.6" fill="none" stroke="#aaa" stroke-width="0.9"/></svg>
<svg style="left:786px;top:57px;" width="6" height="6" viewBox="0 0 6 6"><path d="M0.5 0.5L5.5 5.5M5.5 0.5L0.5 5.5" stroke="#c8c8c8" stroke-width="1.6"/></svg>
<div style="left:643px;top:67px;width:152px;height:431px;background:#262626"></div>
<span class="t j" style="left:647.0px;top:72px;font-size:8px;color:#c0c0c0;--w:31;transform:scaleX(0.9688);">不透明度</span>
<div style="left:681px;top:70px;width:89px;height:11px;background:linear-gradient(90deg,#8ecbf6,#5a9ed6);box-shadow:inset 0 0 0 1px #2a3440"></div>
<span class="t j" style="left:774.0px;top:72px;font-size:8px;color:#c0c0c0;--w:18;transform:scaleX(0.7934);">100 %</span>
<span class="t j" style="left:647.0px;top:87px;font-size:8px;color:#c0c0c0;--w:23;transform:scaleX(0.7188);">ブレンド</span>
<div style="left:674px;top:85px;width:117px;height:13px;background:#454545;border-radius:2px"></div>
<span class="t j" style="left:675.0px;top:87px;font-size:9px;color:#d8d8d8;--w:15;transform:scaleX(0.8333);">通常</span>
<svg style="left:783px;top:89px;" width="6" height="5" viewBox="0 0 6 5"><path d="M0.5 1L3 4L5.5 1z" fill="#9a9a9a"/></svg>
<div style="left:648px;top:104px;width:8px;height:8px;border:1px solid #aaa"></div>
<span class="t j" style="left:659.0px;top:104px;font-size:8px;color:#c0c0c0;--w:44;transform:scaleX(0.9167);">透明度を保護</span>
<div style="left:711px;top:104px;width:8px;height:8px;border:1px solid #aaa"></div>
<span class="t j" style="left:722.0px;top:104px;font-size:8px;color:#c0c0c0;--w:31;transform:scaleX(0.6458);">クリッピング</span>
<div style="left:760px;top:104px;width:8px;height:8px;border:1px solid #aaa"></div>
<span class="t j" style="left:771.0px;top:104px;font-size:8px;color:#c0c0c0;--w:15;transform:scaleX(0.6250);">ロック</span>
<div style="left:644px;top:116px;width:137px;height:358px;background:#4a4a4a"></div>
<div style="left:644px;top:116px;width:137px;height:26px;background:#222"></div>
<div style="left:645px;top:117px;width:135px;height:24px;background:#5c5c5c"></div>
<div style="left:648px;top:126px;width:6px;height:6px;background:#ddd;border-radius:50%"></div>
<div style="left:670px;top:118px;width:15px;height:22px;background:repeating-conic-gradient(#e2e2e2 0 25%,#fff 0 50%) 0 0/6px 6px"></div>
<span class="t j" style="left:700.0px;top:124px;font-size:9px;color:#d8d8d8;--w:29;transform:scaleX(0.7070);">レイヤー3</span>
<div style="left:644px;top:141px;width:137px;height:27px;background:#222"></div>
<div style="left:645px;top:142px;width:135px;height:25px;background:#5c5c5c"></div>
<div style="left:657px;top:142px;width:123px;height:25px;background:#559bd3"></div>
<div style="left:648px;top:151px;width:6px;height:6px;background:#ddd;border-radius:50%"></div>
<div style="left:670px;top:143px;width:15px;height:23px;background:repeating-conic-gradient(#e2e2e2 0 25%,#fff 0 50%) 0 0/6px 6px"></div>
<span class="t j" style="left:700.0px;top:149px;font-size:9px;color:#fff;--w:32;transform:scaleX(0.7802);font-weight:bold">レイヤー2</span>
<div style="left:644px;top:167px;width:137px;height:26px;background:#222"></div>
<div style="left:645px;top:168px;width:135px;height:24px;background:#5c5c5c"></div>
<div style="left:648px;top:177px;width:6px;height:6px;background:#ddd;border-radius:50%"></div>
<div style="left:670px;top:169px;width:15px;height:22px;background:repeating-conic-gradient(#e2e2e2 0 25%,#fff 0 50%) 0 0/6px 6px"></div>
<span class="t j" style="left:700.0px;top:175px;font-size:9px;color:#d8d8d8;--w:29;transform:scaleX(0.7070);">レイヤー1</span>
<div style="left:781px;top:116px;width:13px;height:358px;background:#262626"></div>
<svg style="left:784px;top:117px;" width="6" height="5" viewBox="0 0 6 5"><path d="M0.5 4.5L3 0.5L5.5 4.5z" fill="#9a9a9a"/></svg>
<div style="left:781px;top:124px;width:12px;height:342px;background:linear-gradient(90deg,#777,#5c5c5c);border-radius:3px"></div>
<svg style="left:784px;top:468px;" width="6" height="5" viewBox="0 0 6 5"><path d="M0.5 0.5L3 4.5L5.5 0.5z" fill="#9a9a9a"/></svg>
<div style="left:643px;top:474px;width:152px;height:20px;background:#262626"></div>
<div style="left:647px;top:476px;width:14px;height:15px;background:#474747;border-radius:2px;box-shadow:inset 0 0 0 1px #4f4f4f"></div>
<svg style="left:647px;top:476px;" width="14" height="15" viewBox="0 0 14 15"><path d="M3.5 3h4.5l2.8 2.8v6.2h-7.3z" fill="none" stroke="#ddd" stroke-width="1"/><path d="M8 3v2.8h2.8z" fill="#ddd"/></svg>
<div style="left:664px;top:476px;width:14px;height:15px;background:#474747;border-radius:2px;box-shadow:inset 0 0 0 1px #4f4f4f"></div>
<svg style="left:664px;top:476px;" width="14" height="15" viewBox="0 0 14 15"><path d="M3.5 3h4.5l2.8 2.8v6.2h-7.3z" fill="none" stroke="#ccc" stroke-width="1"/><path d="M5 12l1.5-3l1.5 2l1-1.2l1 2.2z" fill="#999"/><circle cx="7.5" cy="7.5" r="1" fill="#999"/></svg>
<div style="left:681px;top:476px;width:14px;height:15px;background:#474747;border-radius:2px;box-shadow:inset 0 0 0 1px #4f4f4f"></div>
<svg style="left:681px;top:476px;" width="14" height="15" viewBox="0 0 14 15"><path d="M3.5 3h4.5l2.8 2.8v6.2h-7.3z" fill="none" stroke="#ccc" stroke-width="1"/><path d="M6.8 7.5l1-1v5.5" stroke="#ccc" stroke-width="1.1" fill="none"/></svg>
<div style="left:698px;top:476px;width:15px;height:15px;background:#474747;border-radius:2px;box-shadow:inset 0 0 0 1px #4f4f4f"></div>
<svg style="left:698px;top:476px;" width="15" height="15" viewBox="0 0 15 15"><rect x="3" y="3" width="9" height="9" fill="#ddd"/><path d="M3 5.5L5.5 3M3 8L8 3M3 10.5L10.5 3M4.5 12L12 4.5M7 12L12 7M9.5 12L12 9.5" stroke="#444" stroke-width="1"/><path d="M3 6L9 12M3 3.5L11.5 12M6 3L12 9M9 3L12 6" stroke="#777" stroke-width="0.6"/></svg>
<div style="left:715px;top:476px;width:15px;height:15px;background:#474747;border-radius:2px;box-shadow:inset 0 0 0 1px #4f4f4f"></div>
<svg style="left:715px;top:476px;" width="15" height="15" viewBox="0 0 15 15"><path d="M2.3 4h4l1 1.2h5.4v7.3H2.3z" fill="#eee"/><path d="M2.3 6.3h10.4" stroke="#bbb" stroke-width="0.6"/></svg>
<div style="left:737px;top:476px;width:15px;height:15px;background:#474747;border-radius:2px;box-shadow:inset 0 0 0 1px #4f4f4f"></div>
<svg style="left:737px;top:476px;" width="15" height="15" viewBox="0 0 15 15"><rect x="5.5" y="3" width="7" height="7" fill="none" stroke="#ddd" stroke-width="1"/><rect x="3" y="5.5" width="7" height="7" fill="#474747" stroke="#ddd" stroke-width="1"/></svg>
<div style="left:754px;top:476px;width:15px;height:15px;background:#474747;border-radius:2px;box-shadow:inset 0 0 0 1px #4f4f4f"></div>
<svg style="left:754px;top:476px;" width="15" height="15" viewBox="0 0 15 15"><rect x="2.5" y="2.5" width="4" height="3" fill="#ddd"/><rect x="2.5" y="9.5" width="4" height="3" fill="#ddd"/><path d="M4.5 5.5v4M4.5 7.5h4" stroke="#ddd" stroke-width="0.9"/><rect x="8.5" y="5.8" width="4.5" height="3.6" fill="#eee"/></svg>
<div style="left:776px;top:476px;width:15px;height:15px;background:#474747;border-radius:2px;box-shadow:inset 0 0 0 1px #4f4f4f"></div>
<svg style="left:776px;top:476px;" width="15" height="15" viewBox="0 0 15 15"><path d="M2.8 4.3h9.4M6 2.8h3" stroke="#eee" stroke-width="1.3"/><path d="M3.8 5.6h7.4l-0.6 7.6h-6.2z" fill="#eee"/><path d="M5.8 6.8v5.2M7.5 6.8v5.2M9.2 6.8v5.2" stroke="#555" stroke-width="0.9"/></svg>
<div style="left:733px;top:480px;width:1px;height:8px;background:#4a5060"></div>
<div style="left:772px;top:480px;width:1px;height:8px;background:#4a5060"></div>
<div style="left:643px;top:498px;width:152px;height:1px;background:#3f7fae"></div>
<div style="left:643px;top:499px;width:152px;height:13px;background:#383838"></div>
<span class="t j" style="left:701.0px;top:501px;font-size:9px;color:#d0d0d0;--w:16;transform:scaleX(0.8889);">資料</span>
<svg style="left:774px;top:501px;" width="8" height="8" viewBox="0 0 8 8"><path d="M4 1.5H1.5v6h6V5" fill="none" stroke="#aaa" stroke-width="1"/><path d="M4.5 4.5L7.5 1.5M5.5 0.8h2.6v2.6" fill="none" stroke="#aaa" stroke-width="0.9"/></svg>
<svg style="left:786px;top:502px;" width="6" height="6" viewBox="0 0 6 6"><path d="M0.5 0.5L5.5 5.5M5.5 0.5L0.5 5.5" stroke="#c8c8c8" stroke-width="1.6"/></svg>
<div style="left:643px;top:512px;width:152px;height:19px;background:#262626"></div>
<div style="left:645px;top:514px;width:15px;height:15px;background:#474747;border-radius:2px;box-shadow:inset 0 0 0 1px #4f4f4f"></div>
<svg style="left:645px;top:514px;" width="15" height="15" viewBox="0 0 15 15"><path d="M3.6 9.2h7.8a2.2 2.2 0 0 0 0.2-4.4a3.2 3.2 0 0 0-6.1-0.6a2.3 2.3 0 0 0-1.9 5z" fill="#eee"/><path d="M7.5 6.5v6" stroke="#474747" stroke-width="3"/><path d="M7.5 6.5v5" stroke="#eee" stroke-width="1.4"/><path d="M5.2 10.4L7.5 13.2L9.8 10.4z" fill="#eee"/></svg>
<div style="left:662px;top:514px;width:15px;height:15px;background:#474747;border-radius:2px;box-shadow:inset 0 0 0 1px #4f4f4f"></div>
<svg style="left:662px;top:514px;" width="15" height="15" viewBox="0 0 15 15"><path d="M2.5 4h4l1 1h4.5v2H5l-2.5 5z" fill="#ccc"/><path d="M5 7.5h8.5l-2.5 5H2.5z" fill="#eee"/></svg>
<div style="left:680px;top:514px;width:14px;height:15px;background:#252525;border-radius:2px;box-shadow:inset 0 0 0 1px #3d3d3d"></div>
<svg style="left:680px;top:514px;" width="14" height="15" viewBox="0 0 14 15"><path d="M4.5 4.5l6 6M10.5 4.5l-6 6" stroke="#eee" stroke-width="1.5"/></svg>
<div style="left:702px;top:514px;width:14px;height:15px;background:#252525;border-radius:2px;box-shadow:inset 0 0 0 1px #3d3d3d"></div>
<svg style="left:702px;top:514px;" width="14" height="15" viewBox="0 0 14 15"><circle cx="6.5" cy="6.5" r="3.8" fill="none" stroke="#ddd" stroke-width="1.1"/><path d="M9.3 9.3l3.2 3.2" stroke="#ddd" stroke-width="1.8"/><path d="M4.7 6.5h3.6M6.5 4.7v3.6" stroke="#ddd" stroke-width="1"/></svg>
<div style="left:719px;top:514px;width:15px;height:15px;background:#252525;border-radius:2px;box-shadow:inset 0 0 0 1px #3d3d3d"></div>
<svg style="left:719px;top:514px;" width="15" height="15" viewBox="0 0 15 15"><rect x="2.5" y="3" width="10" height="9" fill="none" stroke="#ddd" stroke-width="1"/><path d="M4 7.5h7" stroke="#ddd" stroke-width="0.9"/><path d="M3.5 7.5l2-2v4zM11.5 7.5l-2-2v4z" fill="#ddd"/><path d="M7.5 3v2M7.5 10v2" stroke="#ddd" stroke-width="0.9"/></svg>
<div style="left:736px;top:514px;width:15px;height:15px;background:#252525;border-radius:2px;box-shadow:inset 0 0 0 1px #3d3d3d"></div>
<svg style="left:736px;top:514px;" width="15" height="15" viewBox="0 0 15 15"><circle cx="6.5" cy="6.5" r="3.8" fill="none" stroke="#ddd" stroke-width="1.1"/><path d="M9.3 9.3l3.2 3.2" stroke="#ddd" stroke-width="1.8"/><path d="M4.7 6.5h3.6" stroke="#ddd" stroke-width="1"/></svg>
<div style="left:757px;top:514px;width:15px;height:15px;background:#252525;border-radius:2px;box-shadow:inset 0 0 0 1px #3d3d3d"></div>
<svg style="left:757px;top:514px;" width="15" height="15" viewBox="0 0 15 15"><path d="M3 13l0.3-2.2l5.7-5.7l1.9 1.9l-5.7 5.7z" fill="none" stroke="#eee" stroke-width="1.1"/><path d="M9 4.6l1.4-1.4l1 1l1.4-1.4l1 1l-1.4 1.4l1 1l-1.4 1.4z" fill="#eee"/></svg>
<div style="left:698px;top:518px;width:1px;height:8px;background:#4a5060"></div>
<div style="left:754px;top:518px;width:1px;height:8px;background:#4a5060"></div>
<div style="left:776px;top:518px;width:1px;height:8px;background:#4a5060"></div>
<div style="left:788px;top:514px;width:5px;height:15px;background:#555;border-radius:2px"></div>
<div style="left:643px;top:531px;width:152px;height:31px;background:repeating-conic-gradient(#e6e6e6 0 25%,#fff 0 50%) 0 0/6px 6px"></div>
<svg style="left:786px;top:566px;" width="9" height="9" viewBox="0 0 9 9"><path d="M9 0V9H0z" fill="#4a4a4a"/></svg>
<script>
(function(){var els=document.querySelectorAll('.j');for(var i=0;i<els.length;i++){var e=els[i];e.style.transform='none';var w=parseFloat(getComputedStyle(e).getPropertyValue('--w'));var r=e.getBoundingClientRect().width;if(r>0&&w>0){e.style.transform='scaleX('+(w/r).toFixed(4)+')';}}})();
</script>
</body></html>
